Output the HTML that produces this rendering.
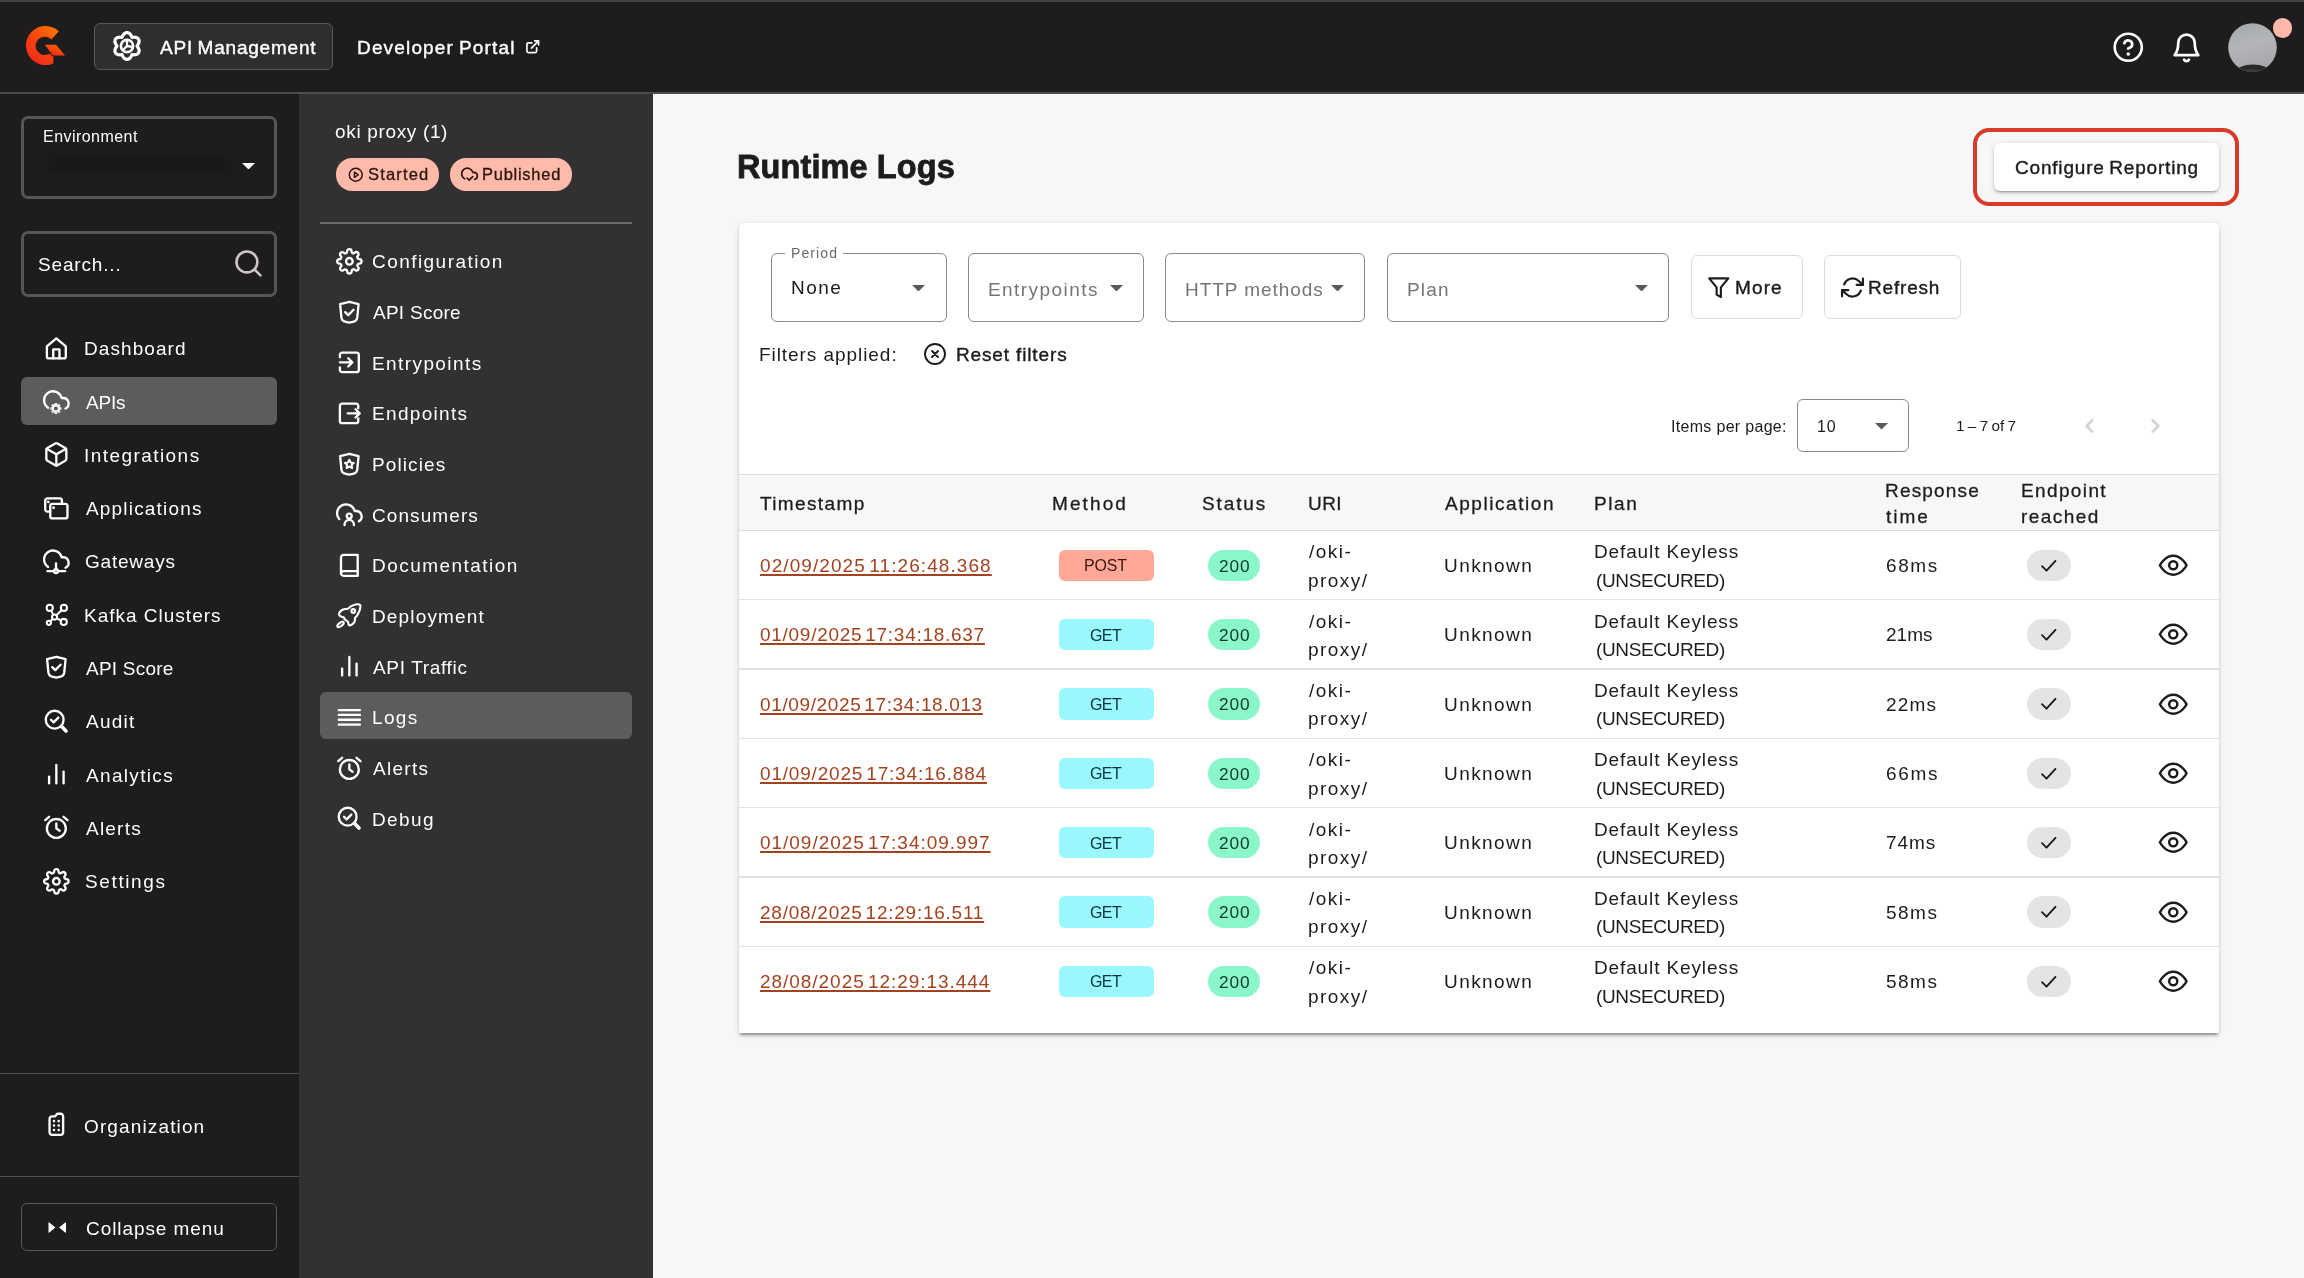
<!DOCTYPE html>
<html lang="en"><head><meta charset="utf-8"><title>Runtime Logs - API Management</title>
<style>
*{box-sizing:border-box;margin:0;padding:0}
html,body{width:2304px;height:1278px;overflow:hidden;background:#f7f7f9}
body{font-family:"Liberation Sans",sans-serif;color:#1e1b1b;position:relative}
.t{position:absolute;white-space:nowrap;display:block;will-change:transform}
.i{position:absolute;fill:none;stroke:currentColor;stroke-linecap:round;stroke-linejoin:round;overflow:visible}
.abs{position:absolute}
#topbar{position:absolute;left:0;top:0;width:2304px;height:94px;background:#1e1c1d;color:#fff}
#topbar:before{content:'';position:absolute;left:0;top:0;width:100%;height:1.6px;background:#414343}
#topbar:after{content:'';position:absolute;left:0;bottom:0;width:100%;height:2.2px;background:#4e4c4d}
#side{position:absolute;left:0;top:94px;width:298.5px;height:1184px;background:#1e1c1d;color:#fff}
#sub{position:absolute;left:298.5px;top:94px;width:354.5px;height:1184px;background:#323031;color:#fff}
#main{position:absolute;left:653px;top:94px;width:1651px;height:1184px;background:#f7f7f9}
.act{position:absolute;background:#5d5b5c;border-radius:6px}
.box{position:absolute;border-radius:5px}
.pill{position:absolute;border-radius:16px}
#card{position:absolute;left:739px;top:222.5px;width:1480px;height:810px;background:#fff;border-radius:5px 5px 2px 2px;box-shadow:0 4px 1.5px -2.7px rgba(0,0,0,.2),0 2.7px 2.7px 0 rgba(0,0,0,.14),0 1.3px 6.7px 0 rgba(0,0,0,.12)}
.hl{position:absolute;height:1.4px;background:#dcdcdf}
a.t{color:#a3421f;text-decoration:underline;text-decoration-thickness:1.7px;text-underline-offset:1.7px}
</style></head><body>

<header id="topbar">
<svg class="abs" style="left:25.9px;top:25.9px;width:39.1px;height:39.1px" viewBox="0 0 40 40">
<defs><linearGradient id="lg" x1="0.85" y1="0.05" x2="0.2" y2="0.95"><stop offset="0" stop-color="#ff6f00"/><stop offset="0.55" stop-color="#f9400f"/><stop offset="1" stop-color="#f02a1d"/></linearGradient></defs>
<path fill="url(#lg)" d="M33.6 5.4A20 20 0 1 0 28 38.33V31H26.8L24.35 28.2A9.4 9.4 0 1 1 26.1 13.9Z"/>
<path fill="url(#lg)" d="M19.2 19.3H30.8L40 30.2H27.4Z"/>
</svg>
<div class="box" style="left:93.7px;top:22.9px;width:239.5px;height:47.4px;background:#2f2d2e;border:1.8px solid #5a5859;border-radius:6px"></div>
<svg class="i" style="left:110.8px;top:30.45px;width:32px;height:32px" viewBox="-16 -16 32 32" stroke-width="3.2">
<path d="M10 0 10.35 0.54 10.77 1.13 11.18 1.77 11.54 2.45 11.83 3.17 12.02 3.9 12.1 4.64 12.06 5.37 11.89 6.06 11.6 6.7 11.2 7.27 10.68 7.76 10.07 8.16 9.39 8.46 8.66 8.66 7.89 8.77 7.12 8.8 6.37 8.76 5.65 8.69 5 8.66 4.71 9.24 4.41 9.89 4.06 10.57 3.65 11.22 3.17 11.83 2.63 12.36 2.03 12.8 1.38 13.13 0.7 13.33 0 13.4 -0.7 13.33 -1.38 13.13 -2.03 12.8 -2.63 12.36 -3.17 11.83 -3.65 11.22 -4.06 10.57 -4.41 9.89 -4.71 9.24 -5 8.66 -5.65 8.69 -6.37 8.76 -7.12 8.8 -7.89 8.77 -8.66 8.66 -9.39 8.46 -10.07 8.16 -10.68 7.76 -11.2 7.27 -11.6 6.7 -11.89 6.06 -12.06 5.37 -12.1 4.64 -12.02 3.9 -11.83 3.17 -11.54 2.45 -11.18 1.77 -10.77 1.13 -10.35 0.54 -10 0 -10.35 -0.54 -10.77 -1.13 -11.18 -1.77 -11.54 -2.45 -11.83 -3.17 -12.02 -3.9 -12.1 -4.64 -12.06 -5.37 -11.89 -6.06 -11.6 -6.7 -11.2 -7.27 -10.68 -7.76 -10.07 -8.16 -9.39 -8.46 -8.66 -8.66 -7.89 -8.77 -7.12 -8.8 -6.37 -8.76 -5.65 -8.69 -5 -8.66 -4.71 -9.24 -4.41 -9.89 -4.06 -10.57 -3.65 -11.22 -3.17 -11.83 -2.63 -12.36 -2.03 -12.8 -1.38 -13.13 -0.7 -13.33 -0 -13.4 0.7 -13.33 1.38 -13.13 2.03 -12.8 2.63 -12.36 3.17 -11.83 3.65 -11.22 4.06 -10.57 4.41 -9.89 4.71 -9.24 5 -8.66 5.65 -8.69 6.37 -8.76 7.12 -8.8 7.89 -8.77 8.66 -8.66 9.39 -8.46 10.07 -8.16 10.68 -7.76 11.2 -7.27 11.6 -6.7 11.89 -6.06 12.06 -5.37 12.1 -4.64 12.02 -3.9 11.83 -3.17 11.54 -2.45 11.18 -1.77 10.77 -1.13 10.35 -0.54Z"/>
<circle r="6.1" stroke-width="2.6"/><path d="M0 0V-6.1M0 0 6 1.1M0 0-4.3 4.3" stroke-width="2.3"/></svg>
<span class="t" style="left:159.6px;top:35.2px;font-size:19px;line-height:25px;letter-spacing:0.79px;word-spacing:-1.5px;-webkit-text-stroke:0.4px currentColor;">API Management</span>
<span class="t" style="left:356.7px;top:35.2px;font-size:19px;line-height:25px;letter-spacing:1.16px;word-spacing:-1.5px;-webkit-text-stroke:0.4px currentColor;">Developer Portal</span>
<svg class="i" style="left:525px;top:39px;width:15.5px;height:15.5px;" viewBox="0 0 24 24" stroke-width="2.6"><path d="M18 13.5V19a2 2 0 0 1-2 2H5a2 2 0 0 1-2-2V8a2 2 0 0 1 2-2h5.5"/><path d="M15 3h6v6M10 14 21 3"/></svg>
<svg class="i" style="left:2111.8px;top:30.5px;width:32.5px;height:32.5px;" viewBox="0 0 24 24" stroke-width="1.95"><circle cx="12" cy="12" r="10"/><path d="M9.1 9a3 3 0 0 1 5.83 1c0 2-3 3-3 3"/><path d="M12 17h.010" stroke-width="2.6"/></svg>
<svg class="i" style="left:2170.2px;top:30.7px;width:33px;height:33px;" viewBox="0 0 24 24" stroke-width="1.95"><path d="M18 8.6A6 6 0 0 0 6 8.6c0 5.8-2.6 9-2.6 9h17.2S18 14.4 18 8.6"/><path d="M13.8 20.8a2 2 0 0 1-3.6 0"/></svg>
<svg class="abs" style="left:2227.5px;top:22.6px;width:49px;height:49px" viewBox="0 0 49 49"><defs><clipPath id="av"><circle cx="24.5" cy="24.5" r="24.3"/></clipPath><linearGradient id="ag" x1="0" y1="0" x2="0.3" y2="1"><stop offset="0" stop-color="#a3a6a9"/><stop offset="0.5" stop-color="#b3b5b8"/><stop offset="1" stop-color="#a6a8ab"/></linearGradient></defs><g clip-path="url(#av)"><rect width="49" height="49" fill="url(#ag)"/><ellipse cx="25" cy="49" rx="17" ry="7.5" fill="#2b2829"/><ellipse cx="25" cy="52" rx="22" ry="6" fill="#3a3738"/></g></svg>
<div class="abs" style="left:2273px;top:18.2px;width:19.4px;height:19.4px;border-radius:50%;background:#ffb9a8"></div>
</header>
<nav id="side">
<div class="box" style="left:21.2px;top:21.799999999999997px;width:256.3px;height:82.8px;border:3.9px solid #575556;border-radius:7px"></div>
<div class="abs" style="left:46px;top:64px;width:184px;height:14px;background:rgba(10,10,14,.28);filter:blur(5px)"></div>
<span class="t" style="left:42.5px;top:31.6px;font-size:16px;line-height:21px;letter-spacing:0.46px;">Environment</span>
<svg class="abs" style="left:241.5px;top:68.80000000000001px;width:13px;height:6.5px" viewBox="0 0 13 6.5"><path d="M0 0h13L6.5 6.5z" fill="#fff"/></svg>
<div class="box" style="left:21.2px;top:136.5px;width:256.3px;height:66.3px;border:3.9px solid #575556;border-radius:7px"></div>
<span class="t" style="left:37.8px;top:157.9px;font-size:19px;line-height:25px;letter-spacing:0.83px;">Search...</span>
<svg class="i" style="left:233.6px;top:155.4px;width:29.5px;height:29.5px;color:#cbc5c5;" viewBox="0 0 24 24" stroke-width="2.1"><circle cx="10.5" cy="10.5" r="8.5"/><path d="m21.5 21.5-4.8-4.8"/></svg>
<svg class="i" style="left:42.6px;top:240.7px;width:26.7px;height:26.7px;" viewBox="0 0 24 24" stroke-width="2.1"><path d="M3.5 10.2 12 3l8.5 7.2V19.5a1.5 1.5 0 0 1-1.5 1.5H5a1.5 1.5 0 0 1-1.5-1.5z"/><path d="M9.2 21v-8h5.6v8"/></svg>
<span class="t" style="left:84.1px;top:242.2px;font-size:19px;line-height:25px;letter-spacing:1.08px;">Dashboard</span>
<div class="act" style="left:21.2px;top:283.1px;width:256.2px;height:47.7px"></div>
<svg class="i" style="left:42.6px;top:293.9px;width:26.7px;height:26.7px;" viewBox="0 0 24 24" stroke-width="2.1"><path d="M4.6 17.7A8 8 0 1 1 16.74 9H18a5 5 0 0 1 2.2 9.5"/><circle cx="11.6" cy="18.4" r="2.9" stroke-width="2.1"/><path d="M15.5 18.4L16.6 18.4M14.36 21.16L15.14 21.94M11.6 22.3L11.6 23.4M8.84 21.16L8.06 21.94M7.7 18.4L6.6 18.4M8.84 15.64L8.06 14.86M11.6 14.5L11.6 13.4M14.36 15.64L15.14 14.86" stroke-width="2.2" stroke-linecap="butt"/></svg>
<span class="t" style="left:85.6px;top:295.5px;font-size:19px;line-height:25px;letter-spacing:-0.21px;">APIs</span>
<svg class="i" style="left:42.6px;top:347.2px;width:26.7px;height:26.7px;" viewBox="0 0 24 24" stroke-width="2.1"><path d="M21 16V8a2 2 0 0 0-1-1.73l-7-4a2 2 0 0 0-2 0l-7 4A2 2 0 0 0 3 8v8a2 2 0 0 0 1 1.73l7 4a2 2 0 0 0 2 0l7-4A2 2 0 0 0 21 16z"/><polyline points="3.27 6.96 12 12.01 20.73 6.96"/><line x1="12" y1="22.08" x2="12" y2="12"/></svg>
<span class="t" style="left:83.9px;top:348.8px;font-size:19px;line-height:25px;letter-spacing:1.44px;">Integrations</span>
<svg class="i" style="left:42.6px;top:400.5px;width:26.7px;height:26.7px;" viewBox="0 0 24 24" stroke-width="2.1"><path d="M6.5 15H4a2 2 0 0 1-2-2V5a2 2 0 0 1 2-2h11a2 2 0 0 1 2 2v2.5"/><rect x="6.5" y="8" width="15.5" height="13" rx="2"/><path d="M9.5 11.5h.010" stroke-width="2.6"/><path d="M4.8 6.2h.010" stroke-width="2.4"/></svg>
<span class="t" style="left:85.6px;top:402.1px;font-size:19px;line-height:25px;letter-spacing:1.18px;">Applications</span>
<svg class="i" style="left:42.6px;top:453.9px;width:26.7px;height:26.7px;" viewBox="0 0 24 24" stroke-width="2.1"><path d="M4.6 17A8 8 0 1 1 16.74 8.3H18a5 5 0 0 1 2.2 9.5"/><circle cx="11.7" cy="20.8" r="1.7"/><path d="M11.7 13.8v5.2M4 20.8h6M13.4 20.8h6.6"/></svg>
<span class="t" style="left:84.6px;top:455.4px;font-size:19px;line-height:25px;letter-spacing:0.79px;">Gateways</span>
<svg class="i" style="left:42.6px;top:507.1px;width:26.7px;height:26.7px;" viewBox="0 0 24 24" stroke-width="2.1"><g stroke-width="1.85"><circle cx="6.05" cy="6.2" r="2.75"/><circle cx="18.8" cy="6.2" r="2.75"/><circle cx="18.65" cy="18.8" r="2.75"/><circle cx="5.3" cy="19.6" r="1.9"/><circle cx="10.4" cy="14.5" r="2.3"/><path d="M7.33 8.64L9.33 12.46M16.84 8.13L12.04 12.88M16.21 17.53L12.44 15.56M6.64 18.26L8.77 16.13"/></g></svg>
<span class="t" style="left:84.1px;top:508.7px;font-size:19px;line-height:25px;letter-spacing:1px;">Kafka Clusters</span>
<svg class="i" style="left:42.6px;top:560.4px;width:26.7px;height:26.7px;" viewBox="0 0 24 24" stroke-width="2.1"><path d="M3.7 4.7 12 2.5l8.3 2.2-1.2 12.1Q18.7 19.7 16 20.3L12 21.2 8 20.3Q5.3 19.7 4.9 16.8Z"/><path d="m8.3 11.8 2.7 2.7 4.8-4.8"/></svg>
<span class="t" style="left:85.6px;top:562px;font-size:19px;line-height:25px;letter-spacing:0.22px;">API Score</span>
<svg class="i" style="left:42.6px;top:613.7px;width:26.7px;height:26.7px;" viewBox="0 0 24 24" stroke-width="2.1"><circle cx="10.5" cy="10.5" r="8"/><path d="m16.5 16.5 4.2 4.2" stroke-width="3.2"/><path d="m7.2 10.6 2.3 2.3 4.3-4.3"/></svg>
<span class="t" style="left:85.6px;top:615.3px;font-size:19px;line-height:25px;letter-spacing:1.24px;">Audit</span>
<svg class="i" style="left:42.6px;top:667px;width:26.7px;height:26.7px;" viewBox="0 0 24 24" stroke-width="2.1"><line x1="12" y1="20" x2="12" y2="3.5"/><line x1="18.5" y1="20" x2="18.5" y2="9.5"/><line x1="5.5" y1="20" x2="5.5" y2="14"/></svg>
<span class="t" style="left:85.6px;top:668.6px;font-size:19px;line-height:25px;letter-spacing:1.33px;">Analytics</span>
<svg class="i" style="left:42.6px;top:720.4px;width:26.7px;height:26.7px;" viewBox="0 0 24 24" stroke-width="2.1"><circle cx="12" cy="13" r="8.5"/><path d="M12 8.5V13l3 2"/><path d="M5.5 2.5 2 5.5"/><path d="m22 5.5-3.5-3"/></svg>
<span class="t" style="left:85.6px;top:721.9px;font-size:19px;line-height:25px;letter-spacing:1.22px;">Alerts</span>
<svg class="i" style="left:42.6px;top:773.6px;width:26.7px;height:26.7px;" viewBox="0 0 24 24" stroke-width="2.1"><circle cx="12" cy="12" r="3"/><path d="M19.4 15a1.65 1.65 0 0 0 .33 1.82l.06.06a2 2 0 0 1 0 2.83 2 2 0 0 1-2.83 0l-.06-.06a1.65 1.65 0 0 0-1.82-.33 1.65 1.65 0 0 0-1 1.51V21a2 2 0 0 1-2 2 2 2 0 0 1-2-2v-.09A1.65 1.65 0 0 0 9 19.4a1.65 1.65 0 0 0-1.82.33l-.06.06a2 2 0 0 1-2.83 0 2 2 0 0 1 0-2.83l.06-.06a1.65 1.65 0 0 0 .33-1.82 1.65 1.65 0 0 0-1.51-1H3a2 2 0 0 1-2-2 2 2 0 0 1 2-2h.09A1.65 1.65 0 0 0 4.6 9a1.65 1.65 0 0 0-.33-1.82l-.06-.06a2 2 0 0 1 0-2.83 2 2 0 0 1 2.83 0l.06.06a1.65 1.65 0 0 0 1.82.33H9a1.65 1.65 0 0 0 1-1.51V3a2 2 0 0 1 2-2 2 2 0 0 1 2 2v.09a1.65 1.65 0 0 0 1 1.51 1.65 1.65 0 0 0 1.82-.33l.06-.06a2 2 0 0 1 2.83 0 2 2 0 0 1 0 2.83l-.06.06a1.65 1.65 0 0 0-.33 1.82V9a1.65 1.65 0 0 0 1.51 1H21a2 2 0 0 1 2 2 2 2 0 0 1-2 2h-.09a1.65 1.65 0 0 0-1.51 1z"/></svg>
<span class="t" style="left:84.7px;top:775.2px;font-size:19px;line-height:25px;letter-spacing:1.62px;">Settings</span>
<div class="abs" style="left:0;top:979px;width:299px;height:1.4px;background:#4f4d4e"></div>
<svg class="i" style="left:42.8px;top:1017.4px;width:26.7px;height:26.7px;" viewBox="0 0 24 24" stroke-width="2.1"><path d="M5.9 7.1a2.2 2.2 0 0 1 2.2-2.2h1.9c.900 0 1.4-.400 1.7-1.1l.100-.200c.300-.700.9-1.1 1.7-1.1h2.4a2.2 2.2 0 0 1 2.2 2.2V19.2a2.2 2.2 0 0 1-2.2 2.2H8.1a2.2 2.2 0 0 1-2.2-2.2z"/><path d="M9.9 9.1h.010M14.1 9.1h.010M9.9 13.1h.010M14.1 13.1h.010M9.9 17.1h.010M14.1 17.1h.010" stroke-width="2.3"/></svg>
<span class="t" style="left:84.4px;top:1019.7px;font-size:19px;line-height:25px;letter-spacing:1.13px;">Organization</span>
<div class="abs" style="left:0;top:1082px;width:299px;height:1.4px;background:#4f4d4e"></div>
<div class="box" style="left:21.2px;top:1109.4px;width:256.2px;height:47.6px;border:1.4px solid #5a5859;border-radius:6px"></div>
<svg class="abs" style="left:48px;top:1128.3px;width:18.5px;height:11px" viewBox="0 0 18.5 11"><path d="M.500.8Q.500 0 1.3.400L7.4 5.5 1.3 10.6Q.500 11 .500 10.2ZM18 .800Q18 0 17.2.400L11.1 5.5 17.2 10.6Q18 11 18 10.2Z" fill="#fff"/></svg>
<span class="t" style="left:85.6px;top:1122.1px;font-size:19px;line-height:25px;letter-spacing:0.92px;">Collapse menu</span>
</nav>
<nav id="sub">
<span class="t" style="left:36.5px;top:25.3px;font-size:19px;line-height:25px;letter-spacing:0.66px;">oki proxy (1)</span>
<div class="pill" style="left:37.3px;top:64.19999999999999px;width:103.5px;height:32.5px;background:#ffbaa9"></div>
<svg class="i" style="left:49.1px;top:72.8px;width:15.5px;height:15.5px;color:#2b140d;" viewBox="0 0 24 24" stroke-width="2.3"><circle cx="12" cy="12" r="10"/><path d="M10 8l6 4-6 4z"/></svg>
<span class="t" style="left:69.8px;top:70.1px;font-size:16.5px;line-height:21px;letter-spacing:1.17px;color:#2b140d;-webkit-text-stroke:0.3px currentColor;">Started</span>
<div class="pill" style="left:151.4px;top:64.19999999999999px;width:122.3px;height:32.5px;background:#ffbaa9"></div>
<svg class="i" style="left:162.2px;top:72.3px;width:17px;height:17px;color:#2b140d;" viewBox="0 0 24 24" stroke-width="2.3"><path d="M5.5 18.2A8 8 0 1 1 16.74 9H18a5 5 0 0 1 1.5 9.8"/><path d="m8.5 17 3 3 5-5"/></svg>
<span class="t" style="left:183.6px;top:70.1px;font-size:16.5px;line-height:21px;letter-spacing:0.73px;color:#2b140d;-webkit-text-stroke:0.3px currentColor;">Published</span>
<div class="abs" style="left:21.5px;top:128.2px;width:312.2px;height:1.4px;background:#6b696a"></div>
<svg class="i" style="left:37.3px;top:153.8px;width:26.7px;height:26.7px;" viewBox="0 0 24 24" stroke-width="2.1"><circle cx="12" cy="12" r="3"/><path d="M19.4 15a1.65 1.65 0 0 0 .33 1.82l.06.06a2 2 0 0 1 0 2.83 2 2 0 0 1-2.83 0l-.06-.06a1.65 1.65 0 0 0-1.82-.33 1.65 1.65 0 0 0-1 1.51V21a2 2 0 0 1-2 2 2 2 0 0 1-2-2v-.09A1.65 1.65 0 0 0 9 19.4a1.65 1.65 0 0 0-1.82.33l-.06.06a2 2 0 0 1-2.83 0 2 2 0 0 1 0-2.83l.06-.06a1.65 1.65 0 0 0 .33-1.82 1.65 1.65 0 0 0-1.51-1H3a2 2 0 0 1-2-2 2 2 0 0 1 2-2h.09A1.65 1.65 0 0 0 4.6 9a1.65 1.65 0 0 0-.33-1.82l-.06-.06a2 2 0 0 1 0-2.83 2 2 0 0 1 2.83 0l.06.06a1.65 1.65 0 0 0 1.82.33H9a1.65 1.65 0 0 0 1-1.51V3a2 2 0 0 1 2-2 2 2 0 0 1 2 2v.09a1.65 1.65 0 0 0 1 1.51 1.65 1.65 0 0 0 1.82-.33l.06-.06a2 2 0 0 1 2.83 0 2 2 0 0 1 0 2.83l-.06.06a1.65 1.65 0 0 0-.33 1.82V9a1.65 1.65 0 0 0 1.51 1H21a2 2 0 0 1 2 2 2 2 0 0 1-2 2h-.09a1.65 1.65 0 0 0-1.51 1z"/></svg>
<span class="t" style="left:73.9px;top:155.3px;font-size:19px;line-height:25px;letter-spacing:1.45px;">Configuration</span>
<svg class="i" style="left:37.3px;top:204.5px;width:26.7px;height:26.7px;" viewBox="0 0 24 24" stroke-width="2.1"><path d="M3.7 4.7 12 2.5l8.3 2.2-1.2 12.1Q18.7 19.7 16 20.3L12 21.2 8 20.3Q5.3 19.7 4.9 16.8Z"/><path d="m8.3 11.8 2.7 2.7 4.8-4.8"/></svg>
<span class="t" style="left:74.9px;top:206px;font-size:19px;line-height:25px;letter-spacing:0.26px;">API Score</span>
<svg class="i" style="left:37.3px;top:255.2px;width:26.7px;height:26.7px;" viewBox="0 0 24 24" stroke-width="2.1"><path d="M3.5 7.5V5.2a2 2 0 0 1 2-2h13a2 2 0 0 1 2 2v13.6a2 2 0 0 1-2 2h-13a2 2 0 0 1-2-2v-2.3"/><path d="M3.5 12h11M11 8.3l3.7 3.7-3.7 3.7"/></svg>
<span class="t" style="left:73.4px;top:256.7px;font-size:19px;line-height:25px;letter-spacing:1.41px;">Entrypoints</span>
<svg class="i" style="left:37.3px;top:305.9px;width:26.7px;height:26.7px;" viewBox="0 0 24 24" stroke-width="2.1"><path d="M20 7.5V5.2a2 2 0 0 0-2-2H5.5a2 2 0 0 0-2 2v13.6a2 2 0 0 0 2 2H18a2 2 0 0 0 2-2v-2.3"/><path d="M10.5 12h10.8M17.6 8.3l3.7 3.7-3.7 3.7"/></svg>
<span class="t" style="left:73.4px;top:307.3px;font-size:19px;line-height:25px;letter-spacing:1.32px;">Endpoints</span>
<svg class="i" style="left:37.3px;top:356.5px;width:26.7px;height:26.7px;" viewBox="0 0 24 24" stroke-width="2.1"><path d="M3.7 4.7 12 2.5l8.3 2.2-1.2 12.1Q18.7 19.7 16 20.3L12 21.2 8 20.3Q5.3 19.7 4.9 16.8Z"/><path d="M12 7.8l1.25 2.5 2.75.400-2 1.95.500 2.75-2.5-1.35-2.5 1.35.500-2.75-2-1.95 2.75-.400z" stroke-width="1.8"/></svg>
<span class="t" style="left:73.4px;top:358px;font-size:19px;line-height:25px;letter-spacing:1.1px;">Policies</span>
<svg class="i" style="left:37.3px;top:407.2px;width:26.7px;height:26.7px;" viewBox="0 0 24 24" stroke-width="2.1"><path d="M2.9 16.2A8 8 0 1 1 16.74 9H18a5 5 0 0 1 2.6 9.3"/><circle cx="11.9" cy="13.5" r="2.2"/><path d="M7.7 21.6v-.400a4.2 4.2 0 0 1 8.4 0v.400"/></svg>
<span class="t" style="left:73.9px;top:408.7px;font-size:19px;line-height:25px;letter-spacing:1.09px;">Consumers</span>
<svg class="i" style="left:37.3px;top:457.9px;width:26.7px;height:26.7px;" viewBox="0 0 24 24" stroke-width="2.1"><path d="M4.5 19.3a2.1 2.1 0 0 1 2.1-2.1H19.5"/><path d="M6.9 2.6H19.5v18.8H6.9a2.4 2.4 0 0 1-2.4-2.4V5a2.4 2.4 0 0 1 2.4-2.4z"/></svg>
<span class="t" style="left:73.4px;top:459.3px;font-size:19px;line-height:25px;letter-spacing:1.46px;">Documentation</span>
<svg class="i" style="left:37.3px;top:508.5px;width:26.7px;height:26.7px;" viewBox="0 0 24 24" stroke-width="2.1"><g stroke-width="1.9"><path d="M21.6 1.7C20.92 1.17 19.07 1.07 17.7 1.3C16.33 1.53 14.58 2.45 13.4 3.1C12.22 3.75 11.57 4.8 10.6 5.2C9.63 5.6 8.55 5.25 7.6 5.5C6.65 5.75 5.68 6.08 4.9 6.7C4.12 7.32 3.2 8.45 2.9 9.2C2.6 9.95 2.77 10.68 3.1 11.2C3.43 11.72 4.27 12.02 4.9 12.3C5.53 12.58 6.43 12.55 6.9 12.9C7.37 13.25 7.28 13.9 7.7 14.4C8.12 14.9 8.87 15.45 9.4 15.9C9.93 16.35 10.6 16.6 10.9 17.1C11.2 17.6 11.03 18.42 11.2 18.9C11.37 19.38 11.5 19.85 11.9 20C12.3 20.15 12.93 20.13 13.6 19.8C14.27 19.47 15.33 18.68 15.9 18C16.47 17.32 16.8 16.45 17 15.7C17.2 14.95 16.77 14.25 17.1 13.5C17.43 12.75 18.38 12.15 19 11.2C19.62 10.25 20.33 8.92 20.8 7.8C21.27 6.68 21.67 5.52 21.8 4.5C21.93 3.48 22.28 2.23 21.6 1.7Z"/><circle cx="15.55" cy="7.2" r="1.65"/><ellipse cx="4.1" cy="19.3" rx="3.4" ry="1.5" transform="rotate(-38 4.1 19.3)"/></g></svg>
<span class="t" style="left:73.4px;top:510px;font-size:19px;line-height:25px;letter-spacing:1.15px;">Deployment</span>
<svg class="i" style="left:37.3px;top:559.2px;width:26.7px;height:26.7px;" viewBox="0 0 24 24" stroke-width="2.1"><line x1="12" y1="20" x2="12" y2="3.5"/><line x1="18.5" y1="20" x2="18.5" y2="9.5"/><line x1="5.5" y1="20" x2="5.5" y2="14"/></svg>
<span class="t" style="left:74.9px;top:560.7px;font-size:19px;line-height:25px;letter-spacing:0.66px;">API Traffic</span>
<div class="act" style="left:21.5px;top:597.5px;width:312.3px;height:47.9px"></div>
<svg class="i" style="left:37.3px;top:609.9px;width:26.7px;height:26.7px;" viewBox="0 0 24 24" stroke-width="2.1"><path d="M2.5 5.5h19M2.5 9.8h19M2.5 14.2h19M2.5 18.5h19"/></svg>
<span class="t" style="left:73.4px;top:611.3px;font-size:19px;line-height:25px;letter-spacing:1.35px;">Logs</span>
<svg class="i" style="left:37.3px;top:660.6px;width:26.7px;height:26.7px;" viewBox="0 0 24 24" stroke-width="2.1"><circle cx="12" cy="13" r="8.5"/><path d="M12 8.5V13l3 2"/><path d="M5.5 2.5 2 5.5"/><path d="m22 5.5-3.5-3"/></svg>
<span class="t" style="left:74.9px;top:662px;font-size:19px;line-height:25px;letter-spacing:1.28px;">Alerts</span>
<svg class="i" style="left:37.3px;top:711.2px;width:26.7px;height:26.7px;" viewBox="0 0 24 24" stroke-width="2.1"><circle cx="10.5" cy="10.5" r="8"/><path d="m16.5 16.5 4.2 4.2" stroke-width="3.2"/><path d="m7.2 10.6 2.3 2.3 4.3-4.3"/></svg>
<span class="t" style="left:73.4px;top:712.7px;font-size:19px;line-height:25px;letter-spacing:1.38px;">Debug</span>
</nav>
<main id="main"></main>
<h1 class="t" style="left:736.7px;top:146px;font-size:32.5px;line-height:42px;letter-spacing:0.1px;font-weight:700;color:#1e1b1b;-webkit-text-stroke:0.8px currentColor;">Runtime Logs</h1>
<div class="box" style="left:1973.2px;top:127.6px;width:266px;height:78.4px;border:4px solid #d63a28;border-radius:16px"></div>
<div class="box" style="left:1993.7px;top:142.6px;width:225px;height:48px;background:#fff;border-radius:6px;box-shadow:0 3px 2px -2px rgba(0,0,0,.2),0 2px 3px 0 rgba(0,0,0,.14),0 1px 6px 0 rgba(0,0,0,.12)"></div>
<span class="t" style="left:2014.8px;top:154.9px;font-size:19px;line-height:25px;letter-spacing:0.81px;word-spacing:-1.5px;-webkit-text-stroke:0.4px currentColor;">Configure Reporting</span>
<section id="card"></section>
<div class="box" style="left:770.8px;top:252.6px;width:175.8px;height:69px;border:1.4px solid #8b8b8b;border-radius:6px"></div>
<div class="abs" style="left:785px;top:250px;width:58px;height:6px;background:#fff"></div>
<span class="t" style="left:790.9px;top:244.4px;font-size:14px;line-height:18px;letter-spacing:1.1px;color:#6a6a6a;">Period</span>
<span class="t" style="left:790.5px;top:275.2px;font-size:19px;line-height:25px;letter-spacing:1.49px;">None</span>
<svg class="abs" style="left:912.3px;top:284.8px;width:13px;height:6.5px" viewBox="0 0 13 6.5"><path d="M0 0h13L6.5 6.5z" fill="#5a5a5a"/></svg>
<div class="box" style="left:968px;top:252.6px;width:175.8px;height:69px;border:1.4px solid #8b8b8b;border-radius:6px"></div>
<span class="t" style="left:987.7px;top:276.9px;font-size:19px;line-height:25px;letter-spacing:1.44px;color:#757575;">Entrypoints</span>
<svg class="abs" style="left:1109.5px;top:284.8px;width:13px;height:6.5px" viewBox="0 0 13 6.5"><path d="M0 0h13L6.5 6.5z" fill="#5a5a5a"/></svg>
<div class="box" style="left:1165.3px;top:252.6px;width:200px;height:69px;border:1.4px solid #8b8b8b;border-radius:6px"></div>
<span class="t" style="left:1185.3px;top:276.9px;font-size:19px;line-height:25px;letter-spacing:0.93px;color:#757575;">HTTP methods</span>
<svg class="abs" style="left:1331px;top:284.8px;width:13px;height:6.5px" viewBox="0 0 13 6.5"><path d="M0 0h13L6.5 6.5z" fill="#5a5a5a"/></svg>
<div class="box" style="left:1386.6px;top:252.6px;width:282.5px;height:69px;border:1.4px solid #8b8b8b;border-radius:6px"></div>
<span class="t" style="left:1406.8px;top:276.9px;font-size:19px;line-height:25px;letter-spacing:1.19px;color:#757575;">Plan</span>
<svg class="abs" style="left:1634.8px;top:284.8px;width:13px;height:6.5px" viewBox="0 0 13 6.5"><path d="M0 0h13L6.5 6.5z" fill="#5a5a5a"/></svg>
<div class="box" style="left:1690.8px;top:255.1px;width:111.8px;height:63.6px;border:1.4px solid #dcdcdf;border-radius:6px"></div>
<svg class="i" style="left:1705.8px;top:274.6px;width:25.5px;height:25.5px;" viewBox="0 0 24 24" stroke-width="2"><path d="M3 3.2h18l-7 8.5v9l-4-2.2V11.7z"/></svg>
<span class="t" style="left:1735.1px;top:275.2px;font-size:19px;line-height:25px;letter-spacing:1.12px;-webkit-text-stroke:0.4px currentColor;">More</span>
<div class="box" style="left:1824.2px;top:255.1px;width:136.4px;height:63.6px;border:1.4px solid #dcdcdf;border-radius:6px"></div>
<svg class="i" style="left:1839.6px;top:274.5px;width:25px;height:25px;" viewBox="0 0 24 24" stroke-width="2.1"><polyline points="22 3.5 22 9.5 16 9.5"/><polyline points="2 20.5 2 14.5 8 14.5"/><path d="M4 9a8.5 8.5 0 0 1 14-3.2L22 9.5M2 14.5l4 3.7A8.5 8.5 0 0 0 20 15"/></svg>
<span class="t" style="left:1868.4px;top:275.2px;font-size:19px;line-height:25px;letter-spacing:0.81px;-webkit-text-stroke:0.4px currentColor;">Refresh</span>
<span class="t" style="left:758.7px;top:341.7px;font-size:19px;line-height:25px;letter-spacing:0.94px;">Filters applied:</span>
<svg class="i" style="left:922.5px;top:342.2px;width:24px;height:24px;" viewBox="0 0 24 24" stroke-width="1.9"><circle cx="12" cy="12" r="10"/><path d="m15 9-6 6M9 9l6 6"/></svg>
<span class="t" style="left:955.8px;top:341.7px;font-size:19px;line-height:25px;letter-spacing:0.86px;-webkit-text-stroke:0.4px currentColor;">Reset filters</span>
<span class="t" style="left:1671.3px;top:415.8px;font-size:16px;line-height:21px;letter-spacing:0.31px;">Items per page:</span>
<div class="box" style="left:1797.3px;top:399.4px;width:111.6px;height:52.5px;border:1.4px solid #8a8a8a;border-radius:6px"></div>
<span class="t" style="left:1817px;top:415.8px;font-size:16px;line-height:21px;letter-spacing:0.8px;">10</span>
<svg class="abs" style="left:1874.5px;top:423px;width:13px;height:6.5px" viewBox="0 0 13 6.5"><path d="M0 0h13L6.5 6.5z" fill="#5a5a5a"/></svg>
<span class="t" style="left:1955.9px;top:416.3px;font-size:15.3px;line-height:20px;letter-spacing:0.08px;word-spacing:-1.1px;">1 – 7 of 7</span>
<svg class="i" style="left:2079.8px;top:416.3px;width:20px;height:20px;color:#d2d2d4;" viewBox="0 0 24 24" stroke-width="3"><path d="m15 5-7 7 7 7"/></svg>
<svg class="i" style="left:2145.2px;top:416.3px;width:20px;height:20px;color:#d2d2d4;" viewBox="0 0 24 24" stroke-width="3"><path d="m9 5 7 7-7 7"/></svg>
<div class="abs" style="left:739px;top:474.5px;width:1480px;height:55.5px;background:#f7f7f9"></div>
<div class="hl" style="left:739px;top:473.6px;width:1480px"></div>
<div class="hl" style="left:739px;top:529.6px;width:1480px"></div>
<span class="t" style="left:760.2px;top:491.3px;font-size:19px;line-height:25px;letter-spacing:1.37px;-webkit-text-stroke:0.3px currentColor;">Timestamp</span>
<span class="t" style="left:1052.1px;top:491.3px;font-size:19px;line-height:25px;letter-spacing:2.1px;-webkit-text-stroke:0.3px currentColor;">Method</span>
<span class="t" style="left:1202px;top:491.3px;font-size:19px;line-height:25px;letter-spacing:1.89px;-webkit-text-stroke:0.3px currentColor;">Status</span>
<span class="t" style="left:1307.8px;top:491.3px;font-size:19px;line-height:25px;letter-spacing:0.43px;-webkit-text-stroke:0.3px currentColor;">URI</span>
<span class="t" style="left:1445.3px;top:491.3px;font-size:19px;line-height:25px;letter-spacing:1.55px;-webkit-text-stroke:0.3px currentColor;">Application</span>
<span class="t" style="left:1593.8px;top:491.3px;font-size:19px;line-height:25px;letter-spacing:1.59px;-webkit-text-stroke:0.3px currentColor;">Plan</span>
<span class="t" style="left:1885.1px;top:477.9px;font-size:19px;line-height:25px;letter-spacing:1.17px;-webkit-text-stroke:0.3px currentColor;">Response</span>
<span class="t" style="left:1886.3px;top:504.1px;font-size:19px;line-height:25px;letter-spacing:1.98px;-webkit-text-stroke:0.3px currentColor;">time</span>
<span class="t" style="left:2020.8px;top:477.9px;font-size:19px;line-height:25px;letter-spacing:1.37px;-webkit-text-stroke:0.3px currentColor;">Endpoint</span>
<span class="t" style="left:2021.1px;top:504.1px;font-size:19px;line-height:25px;letter-spacing:1.45px;-webkit-text-stroke:0.3px currentColor;">reached</span>
<a class="t" style="left:759.9px;top:552.8px;font-size:19px;line-height:25px;letter-spacing:1.08px;word-spacing:-3px;">02/09/2025 11:26:48.368</a>
<div class="box" style="left:1059.2px;top:549.5px;width:95.2px;height:31.4px;background:#ffa897;border-radius:6px"></div>
<span class="t" style="left:1083.9px;top:555.3px;font-size:16px;line-height:21px;letter-spacing:-0.14px;color:#3b160e;">POST</span>
<div class="pill" style="left:1208.1px;top:549.5px;width:52.2px;height:31.4px;background:#8af6c9"></div>
<span class="t" style="left:1218.7px;top:554.6px;font-size:17.3px;line-height:22px;letter-spacing:0.93px;color:#0b3b29;">200</span>
<span class="t" style="left:1309.2px;top:539.2px;font-size:19px;line-height:25px;letter-spacing:1.49px;">/oki-</span>
<span class="t" style="left:1308.1px;top:567.6px;font-size:19px;line-height:25px;letter-spacing:1.47px;">proxy/</span>
<span class="t" style="left:1443.9px;top:552.9px;font-size:19px;line-height:25px;letter-spacing:1.44px;">Unknown</span>
<span class="t" style="left:1593.8px;top:539.2px;font-size:19px;line-height:25px;letter-spacing:0.87px;">Default Keyless</span>
<span class="t" style="left:1595.9px;top:567.6px;font-size:19px;line-height:25px;letter-spacing:-0.37px;">(UNSECURED)</span>
<span class="t" style="left:1885.6px;top:552.9px;font-size:19px;line-height:25px;letter-spacing:1.59px;">68ms</span>
<div class="pill" style="left:2027.3px;top:549.6px;width:44px;height:31.6px;background:#e4e4e5"></div>
<svg class="i" style="left:2038.2px;top:554.8px;width:21.5px;height:21.5px;color:#1e1b1b;" viewBox="0 0 24 24" stroke-width="2.1"><path d="m4.5 12.5 5 5 10-11"/></svg>
<svg class="i" style="left:2158.2px;top:550px;width:30.5px;height:30.5px;color:#1e1b1b;" viewBox="0 0 24 24" stroke-width="1.95"><path d="M1.5 12s3.8-7.5 10.5-7.5S22.5 12 22.5 12s-3.8 7.5-10.5 7.5S1.5 12 1.5 12z"/><circle cx="12" cy="12" r="3.2"/></svg>
<div class="hl" style="left:739px;top:598.9px;width:1480px;background:#e2e2e5"></div>
<a class="t" style="left:759.9px;top:622.1px;font-size:19px;line-height:25px;letter-spacing:0.72px;word-spacing:-3px;">01/09/2025 17:34:18.637</a>
<div class="box" style="left:1059.2px;top:618.8px;width:95.2px;height:31.4px;background:#9af7fe;border-radius:6px"></div>
<span class="t" style="left:1090.3px;top:624.6px;font-size:16px;line-height:21px;letter-spacing:-0.58px;color:#06343b;">GET</span>
<div class="pill" style="left:1208.1px;top:618.8px;width:52.2px;height:31.4px;background:#8af6c9"></div>
<span class="t" style="left:1218.7px;top:623.9px;font-size:17.3px;line-height:22px;letter-spacing:0.93px;color:#0b3b29;">200</span>
<span class="t" style="left:1309.2px;top:608.5px;font-size:19px;line-height:25px;letter-spacing:1.49px;">/oki-</span>
<span class="t" style="left:1308.1px;top:636.9px;font-size:19px;line-height:25px;letter-spacing:1.47px;">proxy/</span>
<span class="t" style="left:1443.9px;top:622.2px;font-size:19px;line-height:25px;letter-spacing:1.44px;">Unknown</span>
<span class="t" style="left:1593.8px;top:608.5px;font-size:19px;line-height:25px;letter-spacing:0.87px;">Default Keyless</span>
<span class="t" style="left:1595.9px;top:636.9px;font-size:19px;line-height:25px;letter-spacing:-0.37px;">(UNSECURED)</span>
<span class="t" style="left:1885.6px;top:622.2px;font-size:19px;line-height:25px;letter-spacing:0.05px;">21ms</span>
<div class="pill" style="left:2027.3px;top:618.9px;width:44px;height:31.6px;background:#e4e4e5"></div>
<svg class="i" style="left:2038.2px;top:624.1px;width:21.5px;height:21.5px;color:#1e1b1b;" viewBox="0 0 24 24" stroke-width="2.1"><path d="m4.5 12.5 5 5 10-11"/></svg>
<svg class="i" style="left:2158.2px;top:619.3px;width:30.5px;height:30.5px;color:#1e1b1b;" viewBox="0 0 24 24" stroke-width="1.95"><path d="M1.5 12s3.8-7.5 10.5-7.5S22.5 12 22.5 12s-3.8 7.5-10.5 7.5S1.5 12 1.5 12z"/><circle cx="12" cy="12" r="3.2"/></svg>
<div class="hl" style="left:739px;top:668.3px;width:1480px;background:#e2e2e5"></div>
<a class="t" style="left:759.9px;top:691.5px;font-size:19px;line-height:25px;letter-spacing:0.63px;word-spacing:-3px;">01/09/2025 17:34:18.013</a>
<div class="box" style="left:1059.2px;top:688.2px;width:95.2px;height:31.4px;background:#9af7fe;border-radius:6px"></div>
<span class="t" style="left:1090.3px;top:693.9px;font-size:16px;line-height:21px;letter-spacing:-0.58px;color:#06343b;">GET</span>
<div class="pill" style="left:1208.1px;top:688.2px;width:52.2px;height:31.4px;background:#8af6c9"></div>
<span class="t" style="left:1218.7px;top:693.3px;font-size:17.3px;line-height:22px;letter-spacing:0.93px;color:#0b3b29;">200</span>
<span class="t" style="left:1309.2px;top:677.9px;font-size:19px;line-height:25px;letter-spacing:1.49px;">/oki-</span>
<span class="t" style="left:1308.1px;top:706.3px;font-size:19px;line-height:25px;letter-spacing:1.47px;">proxy/</span>
<span class="t" style="left:1443.9px;top:691.6px;font-size:19px;line-height:25px;letter-spacing:1.44px;">Unknown</span>
<span class="t" style="left:1593.8px;top:677.9px;font-size:19px;line-height:25px;letter-spacing:0.87px;">Default Keyless</span>
<span class="t" style="left:1595.9px;top:706.3px;font-size:19px;line-height:25px;letter-spacing:-0.37px;">(UNSECURED)</span>
<span class="t" style="left:1885.6px;top:691.6px;font-size:19px;line-height:25px;letter-spacing:1.22px;">22ms</span>
<div class="pill" style="left:2027.3px;top:688.3px;width:44px;height:31.6px;background:#e4e4e5"></div>
<svg class="i" style="left:2038.2px;top:693.4px;width:21.5px;height:21.5px;color:#1e1b1b;" viewBox="0 0 24 24" stroke-width="2.1"><path d="m4.5 12.5 5 5 10-11"/></svg>
<svg class="i" style="left:2158.2px;top:688.6px;width:30.5px;height:30.5px;color:#1e1b1b;" viewBox="0 0 24 24" stroke-width="1.95"><path d="M1.5 12s3.8-7.5 10.5-7.5S22.5 12 22.5 12s-3.8 7.5-10.5 7.5S1.5 12 1.5 12z"/><circle cx="12" cy="12" r="3.2"/></svg>
<div class="hl" style="left:739px;top:737.6px;width:1480px;background:#e2e2e5"></div>
<a class="t" style="left:759.9px;top:760.8px;font-size:19px;line-height:25px;letter-spacing:0.81px;word-spacing:-3px;">01/09/2025 17:34:16.884</a>
<div class="box" style="left:1059.2px;top:757.5px;width:95.2px;height:31.4px;background:#9af7fe;border-radius:6px"></div>
<span class="t" style="left:1090.3px;top:763.3px;font-size:16px;line-height:21px;letter-spacing:-0.58px;color:#06343b;">GET</span>
<div class="pill" style="left:1208.1px;top:757.5px;width:52.2px;height:31.4px;background:#8af6c9"></div>
<span class="t" style="left:1218.7px;top:762.6px;font-size:17.3px;line-height:22px;letter-spacing:0.93px;color:#0b3b29;">200</span>
<span class="t" style="left:1309.2px;top:747.2px;font-size:19px;line-height:25px;letter-spacing:1.49px;">/oki-</span>
<span class="t" style="left:1308.1px;top:775.6px;font-size:19px;line-height:25px;letter-spacing:1.47px;">proxy/</span>
<span class="t" style="left:1443.9px;top:760.9px;font-size:19px;line-height:25px;letter-spacing:1.44px;">Unknown</span>
<span class="t" style="left:1593.8px;top:747.2px;font-size:19px;line-height:25px;letter-spacing:0.87px;">Default Keyless</span>
<span class="t" style="left:1595.9px;top:775.6px;font-size:19px;line-height:25px;letter-spacing:-0.37px;">(UNSECURED)</span>
<span class="t" style="left:1885.6px;top:760.9px;font-size:19px;line-height:25px;letter-spacing:1.72px;">66ms</span>
<div class="pill" style="left:2027.3px;top:757.6px;width:44px;height:31.6px;background:#e4e4e5"></div>
<svg class="i" style="left:2038.2px;top:762.7px;width:21.5px;height:21.5px;color:#1e1b1b;" viewBox="0 0 24 24" stroke-width="2.1"><path d="m4.5 12.5 5 5 10-11"/></svg>
<svg class="i" style="left:2158.2px;top:757.9px;width:30.5px;height:30.5px;color:#1e1b1b;" viewBox="0 0 24 24" stroke-width="1.95"><path d="M1.5 12s3.8-7.5 10.5-7.5S22.5 12 22.5 12s-3.8 7.5-10.5 7.5S1.5 12 1.5 12z"/><circle cx="12" cy="12" r="3.2"/></svg>
<div class="hl" style="left:739px;top:806.9px;width:1480px;background:#e2e2e5"></div>
<a class="t" style="left:759.9px;top:830.1px;font-size:19px;line-height:25px;letter-spacing:0.97px;word-spacing:-3px;">01/09/2025 17:34:09.997</a>
<div class="box" style="left:1059.2px;top:826.8px;width:95.2px;height:31.4px;background:#9af7fe;border-radius:6px"></div>
<span class="t" style="left:1090.3px;top:832.6px;font-size:16px;line-height:21px;letter-spacing:-0.58px;color:#06343b;">GET</span>
<div class="pill" style="left:1208.1px;top:826.8px;width:52.2px;height:31.4px;background:#8af6c9"></div>
<span class="t" style="left:1218.7px;top:831.9px;font-size:17.3px;line-height:22px;letter-spacing:0.93px;color:#0b3b29;">200</span>
<span class="t" style="left:1309.2px;top:816.5px;font-size:19px;line-height:25px;letter-spacing:1.49px;">/oki-</span>
<span class="t" style="left:1308.1px;top:844.9px;font-size:19px;line-height:25px;letter-spacing:1.47px;">proxy/</span>
<span class="t" style="left:1443.9px;top:830.2px;font-size:19px;line-height:25px;letter-spacing:1.44px;">Unknown</span>
<span class="t" style="left:1593.8px;top:816.5px;font-size:19px;line-height:25px;letter-spacing:0.87px;">Default Keyless</span>
<span class="t" style="left:1595.9px;top:844.9px;font-size:19px;line-height:25px;letter-spacing:-0.37px;">(UNSECURED)</span>
<span class="t" style="left:1885.6px;top:830.2px;font-size:19px;line-height:25px;letter-spacing:0.89px;">74ms</span>
<div class="pill" style="left:2027.3px;top:826.9px;width:44px;height:31.6px;background:#e4e4e5"></div>
<svg class="i" style="left:2038.2px;top:832.1px;width:21.5px;height:21.5px;color:#1e1b1b;" viewBox="0 0 24 24" stroke-width="2.1"><path d="m4.5 12.5 5 5 10-11"/></svg>
<svg class="i" style="left:2158.2px;top:827.3px;width:30.5px;height:30.5px;color:#1e1b1b;" viewBox="0 0 24 24" stroke-width="1.95"><path d="M1.5 12s3.8-7.5 10.5-7.5S22.5 12 22.5 12s-3.8 7.5-10.5 7.5S1.5 12 1.5 12z"/><circle cx="12" cy="12" r="3.2"/></svg>
<div class="hl" style="left:739px;top:876.3px;width:1480px;background:#e2e2e5"></div>
<a class="t" style="left:759.6px;top:899.5px;font-size:19px;line-height:25px;letter-spacing:0.75px;word-spacing:-3px;">28/08/2025 12:29:16.511</a>
<div class="box" style="left:1059.2px;top:896.2px;width:95.2px;height:31.4px;background:#9af7fe;border-radius:6px"></div>
<span class="t" style="left:1090.3px;top:901.9px;font-size:16px;line-height:21px;letter-spacing:-0.58px;color:#06343b;">GET</span>
<div class="pill" style="left:1208.1px;top:896.2px;width:52.2px;height:31.4px;background:#8af6c9"></div>
<span class="t" style="left:1218.7px;top:901.3px;font-size:17.3px;line-height:22px;letter-spacing:0.93px;color:#0b3b29;">200</span>
<span class="t" style="left:1309.2px;top:885.9px;font-size:19px;line-height:25px;letter-spacing:1.49px;">/oki-</span>
<span class="t" style="left:1308.1px;top:914.3px;font-size:19px;line-height:25px;letter-spacing:1.47px;">proxy/</span>
<span class="t" style="left:1443.9px;top:899.6px;font-size:19px;line-height:25px;letter-spacing:1.44px;">Unknown</span>
<span class="t" style="left:1593.8px;top:885.9px;font-size:19px;line-height:25px;letter-spacing:0.87px;">Default Keyless</span>
<span class="t" style="left:1595.9px;top:914.3px;font-size:19px;line-height:25px;letter-spacing:-0.37px;">(UNSECURED)</span>
<span class="t" style="left:1885.8px;top:899.6px;font-size:19px;line-height:25px;letter-spacing:1.49px;">58ms</span>
<div class="pill" style="left:2027.3px;top:896.3px;width:44px;height:31.6px;background:#e4e4e5"></div>
<svg class="i" style="left:2038.2px;top:901.4px;width:21.5px;height:21.5px;color:#1e1b1b;" viewBox="0 0 24 24" stroke-width="2.1"><path d="m4.5 12.5 5 5 10-11"/></svg>
<svg class="i" style="left:2158.2px;top:896.6px;width:30.5px;height:30.5px;color:#1e1b1b;" viewBox="0 0 24 24" stroke-width="1.95"><path d="M1.5 12s3.8-7.5 10.5-7.5S22.5 12 22.5 12s-3.8 7.5-10.5 7.5S1.5 12 1.5 12z"/><circle cx="12" cy="12" r="3.2"/></svg>
<div class="hl" style="left:739px;top:945.6px;width:1480px;background:#e2e2e5"></div>
<a class="t" style="left:759.6px;top:968.8px;font-size:19px;line-height:25px;letter-spacing:0.96px;word-spacing:-3px;">28/08/2025 12:29:13.444</a>
<div class="box" style="left:1059.2px;top:965.5px;width:95.2px;height:31.4px;background:#9af7fe;border-radius:6px"></div>
<span class="t" style="left:1090.3px;top:971.3px;font-size:16px;line-height:21px;letter-spacing:-0.58px;color:#06343b;">GET</span>
<div class="pill" style="left:1208.1px;top:965.5px;width:52.2px;height:31.4px;background:#8af6c9"></div>
<span class="t" style="left:1218.7px;top:970.6px;font-size:17.3px;line-height:22px;letter-spacing:0.93px;color:#0b3b29;">200</span>
<span class="t" style="left:1309.2px;top:955.2px;font-size:19px;line-height:25px;letter-spacing:1.49px;">/oki-</span>
<span class="t" style="left:1308.1px;top:983.6px;font-size:19px;line-height:25px;letter-spacing:1.47px;">proxy/</span>
<span class="t" style="left:1443.9px;top:968.9px;font-size:19px;line-height:25px;letter-spacing:1.44px;">Unknown</span>
<span class="t" style="left:1593.8px;top:955.2px;font-size:19px;line-height:25px;letter-spacing:0.87px;">Default Keyless</span>
<span class="t" style="left:1595.9px;top:983.6px;font-size:19px;line-height:25px;letter-spacing:-0.37px;">(UNSECURED)</span>
<span class="t" style="left:1885.8px;top:968.9px;font-size:19px;line-height:25px;letter-spacing:1.49px;">58ms</span>
<div class="pill" style="left:2027.3px;top:965.6px;width:44px;height:31.6px;background:#e4e4e5"></div>
<svg class="i" style="left:2038.2px;top:970.7px;width:21.5px;height:21.5px;color:#1e1b1b;" viewBox="0 0 24 24" stroke-width="2.1"><path d="m4.5 12.5 5 5 10-11"/></svg>
<svg class="i" style="left:2158.2px;top:965.9px;width:30.5px;height:30.5px;color:#1e1b1b;" viewBox="0 0 24 24" stroke-width="1.95"><path d="M1.5 12s3.8-7.5 10.5-7.5S22.5 12 22.5 12s-3.8 7.5-10.5 7.5S1.5 12 1.5 12z"/><circle cx="12" cy="12" r="3.2"/></svg>
</body></html>
